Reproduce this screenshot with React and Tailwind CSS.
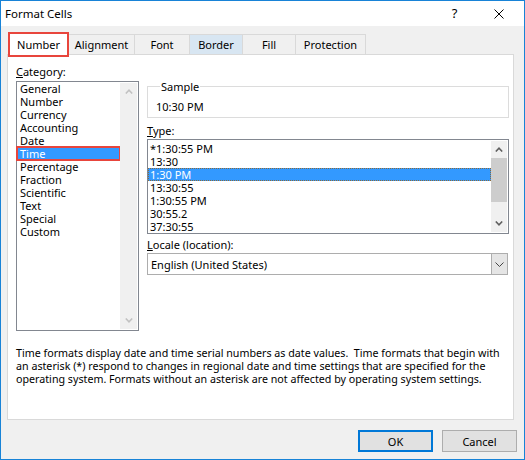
import { useState } from "react";

const categories = [
  "General",
  "Number",
  "Currency",
  "Accounting",
  "Date",
  "Time",
  "Percentage",
  "Fraction",
  "Scientific",
  "Text",
  "Special",
  "Custom",
];

const timeTypes = ["*1:30:55 PM", "13:30", "1:30 PM", "13:30:55", "1:30:55 PM", "30:55.2", "37:30:55"];

const tabs = [
  { name: "Alignment", w: "w-[66px]" },
  { name: "Font", w: "w-[55px]" },
  { name: "Border", w: "w-[53px]", hover: true },
  { name: "Fill", w: "w-[53px]" },
  { name: "Protection", w: "w-[70px]" },
];

const Chevron = ({ up, color, className }) => (
  <svg width="8" height="5" viewBox="0 0 8 5" className={className}>
    <polyline
      points={up ? "0.8,4.5 4,1.2 7.2,4.5" : "0.8,0.5 4,3.8 7.2,0.5"}
      fill="none"
      stroke={color}
      strokeWidth="1.6"
    />
  </svg>
);

const App = () => {
  const [category, setCategory] = useState("Time");
  const [type, setType] = useState("1:30 PM");

  return (
    <div className="w-[525px] h-[460px] bg-[#f0f0f0] border border-[#1883d7] flex flex-col font-['Noto_Sans',sans-serif] text-[11px] leading-[13px] text-black">
      {/* ── Title bar ── */}
      <div className="h-[25px] bg-white flex items-center pl-[4px] shrink-0">
        <span className="text-[11.5px]">Format Cells</span>
        <span className="ml-auto w-[37px] text-center text-[13px]">?</span>
        <span className="w-[51px] flex justify-center">
          <svg width="10" height="10" viewBox="0 0 10 10">
            <path d="M0.5 0.5L9.5 9.5M9.5 0.5L0.5 9.5" stroke="#000" strokeWidth="1" />
          </svg>
        </span>
      </div>

      {/* ── Tabs ── */}
      <div className="flex items-end mt-[6px] ml-[7px] relative z-10">
        <div className="w-[61px] h-[25px] -mb-[3px] bg-white outline-2 outline-solid outline-[#e8453c] -outline-offset-2 flex items-center justify-center">
          Number
        </div>
        {tabs.map((tab) => (
          <div
            key={tab.name}
            className={`${tab.w} h-[20px] border-t border-r border-[#d9d9d9] flex items-center justify-center ${
              tab.hover ? "bg-[#d8e6f2]" : "bg-[#f0f0f0]"
            }`}
          >
            {tab.name}
          </div>
        ))}
      </div>

      {/* ── Number tab page ── */}
      <div className="ml-[6px] w-[507px] h-[366px] border border-[#d9d9d9] bg-white flex flex-col shrink-0">
        <div className="flex pl-[8px] pt-[10px]">
          {/* Category list */}
          <div className="w-[123px] flex flex-col">
            <div className="h-[13px] mb-[3px]">
              <span className="underline">C</span>ategory:
            </div>
            <div className="h-[250px] border border-[#828790] flex">
              <div className="flex-1 flex flex-col">
                {categories.map((c) => (
                  <div
                    key={c}
                    onClick={() => setCategory(c)}
                    className={`h-[13px] pl-[3px] whitespace-nowrap ${
                      c === category
                        ? "bg-[#3399ff] text-white outline-2 outline-solid outline-[#e8453c] -outline-offset-1"
                        : ""
                    }`}
                  >
                    {c}
                  </div>
                ))}
              </div>
              <div className="w-[17px] my-px mr-px bg-[#f0f0f0] flex flex-col items-center justify-between py-[6px]">
                <Chevron up color="#c2c2c2" />
                <Chevron color="#c2c2c2" />
              </div>
            </div>
          </div>

          {/* Sample, type and locale */}
          <div className="ml-[8px] w-[362px] flex flex-col">
            <fieldset className="mt-[15px] border border-[#dcdcdc] pl-[8px] pb-[4px]">
              <legend className="ml-[4px] px-px">Sample</legend>
              <div className="pt-[7px] h-[20px]">10:30 PM</div>
            </fieldset>

            <div className="mt-[6px] h-[13px]">
              <span className="underline">T</span>ype:
            </div>
            <div className="mt-[2px] h-[95px] border border-[#828790] flex">
              <div className="flex-1 flex flex-col pt-[2px]">
                {timeTypes.map((t) => (
                  <div
                    key={t}
                    onClick={() => setType(t)}
                    className={`h-[13px] pl-[2px] whitespace-nowrap ${
                      t === type ? "bg-[#3399ff] text-white border border-dotted border-[#8a6a3a] pl-px leading-[11px]" : ""
                    }`}
                  >
                    {t}
                  </div>
                ))}
              </div>
              <div className="w-[16px] my-px mr-px bg-[#f0f0f0] flex flex-col">
                <div className="h-[17px] flex items-center justify-center">
                  <Chevron up color="#606060" />
                </div>
                <div className="h-[44px] bg-[#cdcdcd]" />
                <div className="flex-1" />
                <div className="h-[17px] flex items-center justify-center">
                  <Chevron color="#606060" />
                </div>
              </div>
            </div>

            <div className="mt-[4px] h-[13px]">
              <span className="underline">L</span>ocale (location):
            </div>
            <div className="mt-[2px] w-[361px] h-[22px] border border-[#adadad] flex items-center">
              <span className="flex-1 pl-[3px]">English (United States)</span>
              <span className="w-[16px] h-[20px] border-l border-[#adadad] bg-[#e5e5e5] flex items-center justify-center">
                <svg width="9" height="5" viewBox="0 0 9 5">
                  <polyline points="0.5,0.5 4.5,4.5 8.5,0.5" fill="none" stroke="#444" strokeWidth="1" />
                </svg>
              </span>
            </div>
          </div>
        </div>

        <p className="mt-[16px] pl-[8px] whitespace-pre text-[10.7px]">
          {"Time formats display date and time serial numbers as date values.  Time formats that begin with\n" +
            "an asterisk (*) respond to changes in regional date and time settings that are specified for the\n" +
            "operating system. Formats without an asterisk are not affected by operating system settings."}
        </p>
      </div>

      {/* ── Dialog buttons ── */}
      <div className="flex justify-end gap-[9px] mt-[10px] pr-[7px]">
        <button className="w-[75px] h-[22px] border-2 border-[#0078d7] bg-[#e1e1e1]">OK</button>
        <button className="w-[75px] h-[22px] border border-[#adadad] bg-[#e1e1e1]">Cancel</button>
      </div>
    </div>
  );
};

export default App;
